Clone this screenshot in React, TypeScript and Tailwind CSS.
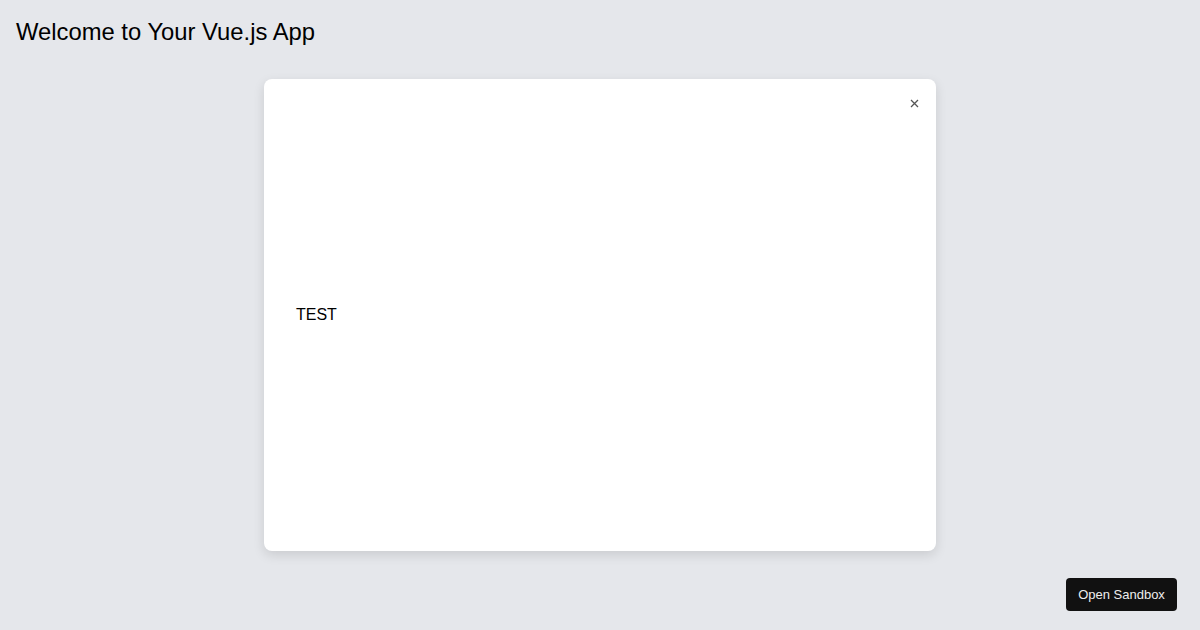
import React from 'react';

export default function App() {
  return (
    <div className="relative h-[630px] w-full overflow-hidden bg-[#e5e7eb] font-['Liberation_Sans',Arial,sans-serif] text-black">
      <h1 className="px-4 pt-5 text-[23.8px] leading-none">Welcome to Your Vue.js App</h1>

      {/* MODAL */}
      <div className="absolute inset-0 flex items-center justify-center">
        <div className="relative flex h-[472px] w-[672px] items-center rounded-lg bg-white px-8 shadow-[0_4px_12px_rgba(0,0,0,0.12)]">
          <button className="absolute right-[17px] top-[19px] flex h-[10px] w-[10px] items-center justify-center text-[#555555]">
            <svg width="9" height="9" viewBox="0 0 9 9" fill="none" stroke="currentColor" strokeWidth="1.3">
              <path d="M1 1 L8 8 M8 1 L1 8" />
            </svg>
          </button>
          <p className="text-base">TEST</p>
        </div>
      </div>

      {/* SANDBOX BUTTON */}
      <button className="absolute bottom-[19px] right-[23px] h-[33px] w-[111px] rounded bg-[#111111] text-[13px] text-[#eeeeee]">
        Open Sandbox
      </button>
    </div>
  );
}
